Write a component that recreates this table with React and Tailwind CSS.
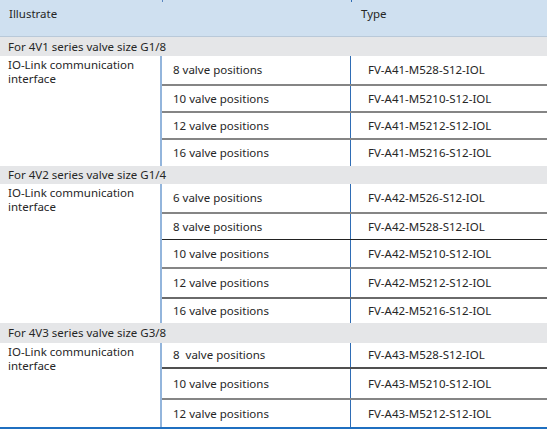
import React from "react";

const sections = [
  {
    title: "For 4V1 series valve size G1/8",
    band: "h-[19px]",
    rows: [
      ["8 valve positions", "FV-A41-M528-S12-IOL", "h-[28px]", ""],
      ["10 valve positions", "FV-A41-M5210-S12-IOL", "h-[27px]", "border-t-2 border-[#858585]"],
      ["12 valve positions", "FV-A41-M5212-S12-IOL", "h-[27px]", "border-t-2 border-[#858585]"],
      ["16 valve positions", "FV-A41-M5216-S12-IOL", "h-[28px]", "border-t-2 border-[#858585]"],
    ],
  },
  {
    title: "For 4V2 series valve size G1/4",
    band: "h-[18px]",
    rows: [
      ["6 valve positions", "FV-A42-M526-S12-IOL", "h-[28px]", ""],
      ["8 valve positions", "FV-A42-M528-S12-IOL", "h-[27px]", "border-t-2 border-[#858585]"],
      ["10 valve positions", "FV-A42-M5210-S12-IOL", "h-[28px]", "border-t border-[#222222]"],
      ["12 valve positions", "FV-A42-M5212-S12-IOL", "h-[30px]", "border-t-2 border-[#858585]"],
      ["16 valve positions", "FV-A42-M5216-S12-IOL", "h-[26px]", "border-t-2 border-[#6a6a6a]"],
    ],
  },
  {
    title: "For 4V3 series valve size G3/8",
    band: "h-[20px]",
    rows: [
      ["8  valve positions", "FV-A43-M528-S12-IOL", "h-[24px]", ""],
      ["10 valve positions", "FV-A43-M5210-S12-IOL", "h-[31px]", "border-t-2 border-[#505050]"],
      ["12 valve positions", "FV-A43-M5212-S12-IOL", "h-[29px]", "border-t-2 border-[#858585]"],
    ],
  },
];

export default function App() {
  return (
    <div
      className="w-[551px] h-[430px] bg-white text-[#262626] text-[11.5px] leading-[14px]"
      style={{ fontFamily: '"Noto Sans", "Open Sans", sans-serif' }}
    >
      <div className="w-[547px]">
        {/* header */}
        <div className="bg-[#cfe0f0] h-[37px] border-b border-[#b9c9d9]">
          <div className="flex h-[2px]">
            <div className="w-[162px]" />
            <div className="w-[189px] border-l border-[#5b87c0]" />
            <div className="flex-1 border-l border-[#2f6db5]" />
          </div>
          <div className="flex pt-[5px]">
            <div className="w-[351px] pl-[9px]">Illustrate</div>
            <div className="flex-1 pl-[10px]">Type</div>
          </div>
        </div>

        {sections.map((s, si) => (
          <div key={si}>
            <div className={`bg-[#e5e6e8] ${s.band} flex items-center pl-[8px]`}>
              {s.title}
            </div>
            <div className="flex">
              <div className="w-[162px] pl-[8px] pt-[2px] border-r-2 border-[#93b5dc]">
                IO-Link communication
                <br />
                interface
              </div>
              <div className="flex-1 flex flex-col">
                {s.rows.map((r, ri) => (
                  <div key={ri} className={`flex ${r[2]} ${r[3]}`}>
                    <div className="w-[188px] flex items-center pl-[11px] whitespace-pre">
                      {r[0]}
                    </div>
                    <div className="flex-1 flex items-center pl-[17px] border-l border-[#2f6db5]">
                      {r[1]}
                    </div>
                  </div>
                ))}
              </div>
            </div>
          </div>
        ))}
        <div className="h-[2px] bg-[#1f6fc0]" />
      </div>
    </div>
  );
}
